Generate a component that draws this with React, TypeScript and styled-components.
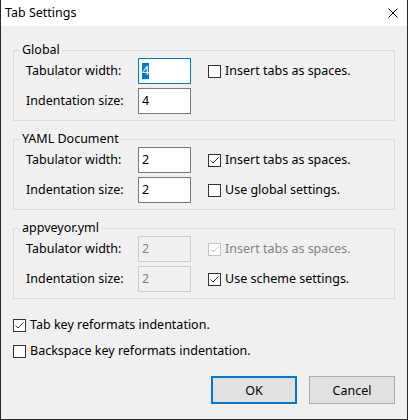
import * as React from 'react';
import styled, { createGlobalStyle } from "styled-components"

const GlobalStyle = createGlobalStyle`
  html, body {
    margin: 0;
    padding: 0;
    background: #ffffff;
  }
  body {
    font-family: "Noto Sans", "Liberation Sans", sans-serif;
    font-size: 12.5px;
    color: #000000;
  }
`

const Window = styled.div`
  box-sizing: border-box;
  width: 408px;
  height: 420px;
  display: flex;
  flex-direction: column;
  border: 1px solid #2b2b2b;
  border-top: none;
  background: #f0f0f0;
`

const TitleBar = styled.div`
  flex: none;
  height: 26px;
  display: flex;
  align-items: center;
  justify-content: space-between;
  padding: 0 9px 0 4px;
  background: #ffffff;
`

const Title = styled.span`
  line-height: 16px;
`

const Body = styled.div`
  flex: 1;
  display: flex;
  flex-direction: column;
  padding: 16px 12px 15px 12px;
`

const Group = styled.fieldset`
  margin: 0 0 10px;
  padding: 0 12px 6px 6px;
  min-width: 0;
  border: 1px solid #dcdcdc;
`

const Legend = styled.legend`
  padding: 0 2px;
  line-height: 16px;
`

const Rows = styled.div`
  display: flex;
  flex-direction: column;
  gap: 4px;
  padding-left: 6px;
`

const Row = styled.div`
  display: flex;
  align-items: center;
  height: 26px;
`

const Label = styled.span`
  flex: none;
  width: 112px;
  line-height: 16px;
`

const Field = styled.div<{ $focused?: boolean; $disabled?: boolean }>`
  box-sizing: border-box;
  flex: none;
  width: 53px;
  height: 26px;
  display: flex;
  align-items: center;
  padding: 0 3px;
  line-height: 16px;
  background: ${(p) => (p.$disabled ? "#f0f0f0" : "#ffffff")};
  color: ${(p) => (p.$disabled ? "#838383" : "#000000")};
  border: 1px solid ${(p) => (p.$focused ? "#0078d7" : p.$disabled ? "#cccccc" : "#7a7a7a")};
`

const Selected = styled.span`
  background: #0078d7;
  color: #ffffff;
`

const CheckLabel = styled.label<{ $indent: number; $disabled?: boolean }>`
  display: flex;
  align-items: center;
  gap: 4px;
  height: 26px;
  margin-left: ${(p) => p.$indent}px;
  line-height: 16px;
  color: ${(p) => (p.$disabled ? "#838383" : "#000000")};
`

const Box = styled.span<{ $disabled?: boolean }>`
  box-sizing: border-box;
  flex: none;
  width: 13px;
  height: 13px;
  display: flex;
  background: #ffffff;
  border: 1px solid ${(p) => (p.$disabled ? "#c4c4c4" : "#333333")};
`

const Options = styled.div`
  display: flex;
  flex-direction: column;
  margin-top: 3px;
`

const ButtonBar = styled.div`
  display: flex;
  justify-content: flex-end;
  gap: 12px;
  margin-top: 12px;
`

const Button = styled.button<{ $primary?: boolean }>`
  box-sizing: border-box;
  width: 86px;
  height: 28px;
  padding: 0;
  font-family: inherit;
  font-size: 12.5px;
  color: #000000;
  background: #e1e1e1;
  border: ${(p) => (p.$primary ? "2px solid #0078d7" : "1px solid #adadad")};
  border-radius: 0;
`

const CloseIcon = () => (
  <svg width="10" height="10" viewBox="0 0 10 10">
    <path d="M0.5 0.5 L9.5 9.5 M9.5 0.5 L0.5 9.5" stroke="#000" strokeWidth="1" fill="none" />
  </svg>
)

interface ICheck {
  checked?: boolean;
  disabled?: boolean;
  indent?: number;
  children: React.ReactNode;
}

const Check = ({ checked, disabled, indent = 0, children }: ICheck): JSX.Element => (
  <CheckLabel $indent={indent} $disabled={disabled}>
    <Box $disabled={disabled}>
      {checked && (
        <svg width="11" height="11" viewBox="0 0 11 11">
          <polyline
            points="1.5,5.5 4,8 9.5,2.5"
            stroke={disabled ? "#c4c4c4" : "#333333"}
            strokeWidth="1"
            fill="none"
          />
        </svg>
      )}
    </Box>
    {children}
  </CheckLabel>
)

interface IGroup {
  title: string;
  tab: React.ReactNode;
  indent: React.ReactNode;
  disabled?: boolean;
  first: JSX.Element;
  second?: JSX.Element;
}

const SettingsGroup = ({ title, tab, indent, disabled, first, second }: IGroup): JSX.Element => (
  <Group>
    <Legend>{title}</Legend>
    <Rows>
      <Row>
        <Label>Tabulator width:</Label>
        <Field $disabled={disabled} $focused={title === "Global"}>{tab}</Field>
        {first}
      </Row>
      <Row>
        <Label>Indentation size:</Label>
        <Field $disabled={disabled}>{indent}</Field>
        {second}
      </Row>
    </Rows>
  </Group>
)

export default function App(): JSX.Element {
  return (
    <>
      <GlobalStyle />
      <Window>
        <TitleBar>
          <Title>Tab Settings</Title>
          <CloseIcon />
        </TitleBar>
        <Body>
          <SettingsGroup
            title="Global"
            tab={<Selected>4</Selected>}
            indent="4"
            first={<Check indent={17}>Insert tabs as spaces.</Check>}
          />
          <SettingsGroup
            title="YAML Document"
            tab="2"
            indent="2"
            first={<Check indent={17} checked>Insert tabs as spaces.</Check>}
            second={<Check indent={17}>Use global settings.</Check>}
          />
          <SettingsGroup
            title="appveyor.yml"
            tab="2"
            indent="2"
            disabled
            first={<Check indent={17} checked disabled>Insert tabs as spaces.</Check>}
            second={<Check indent={17} checked>Use scheme settings.</Check>}
          />
          <Options>
            <Check checked>Tab key reformats indentation.</Check>
            <Check>Backspace key reformats indentation.</Check>
          </Options>
          <ButtonBar>
            <Button $primary>OK</Button>
            <Button>Cancel</Button>
          </ButtonBar>
        </Body>
      </Window>
    </>
  )
}
